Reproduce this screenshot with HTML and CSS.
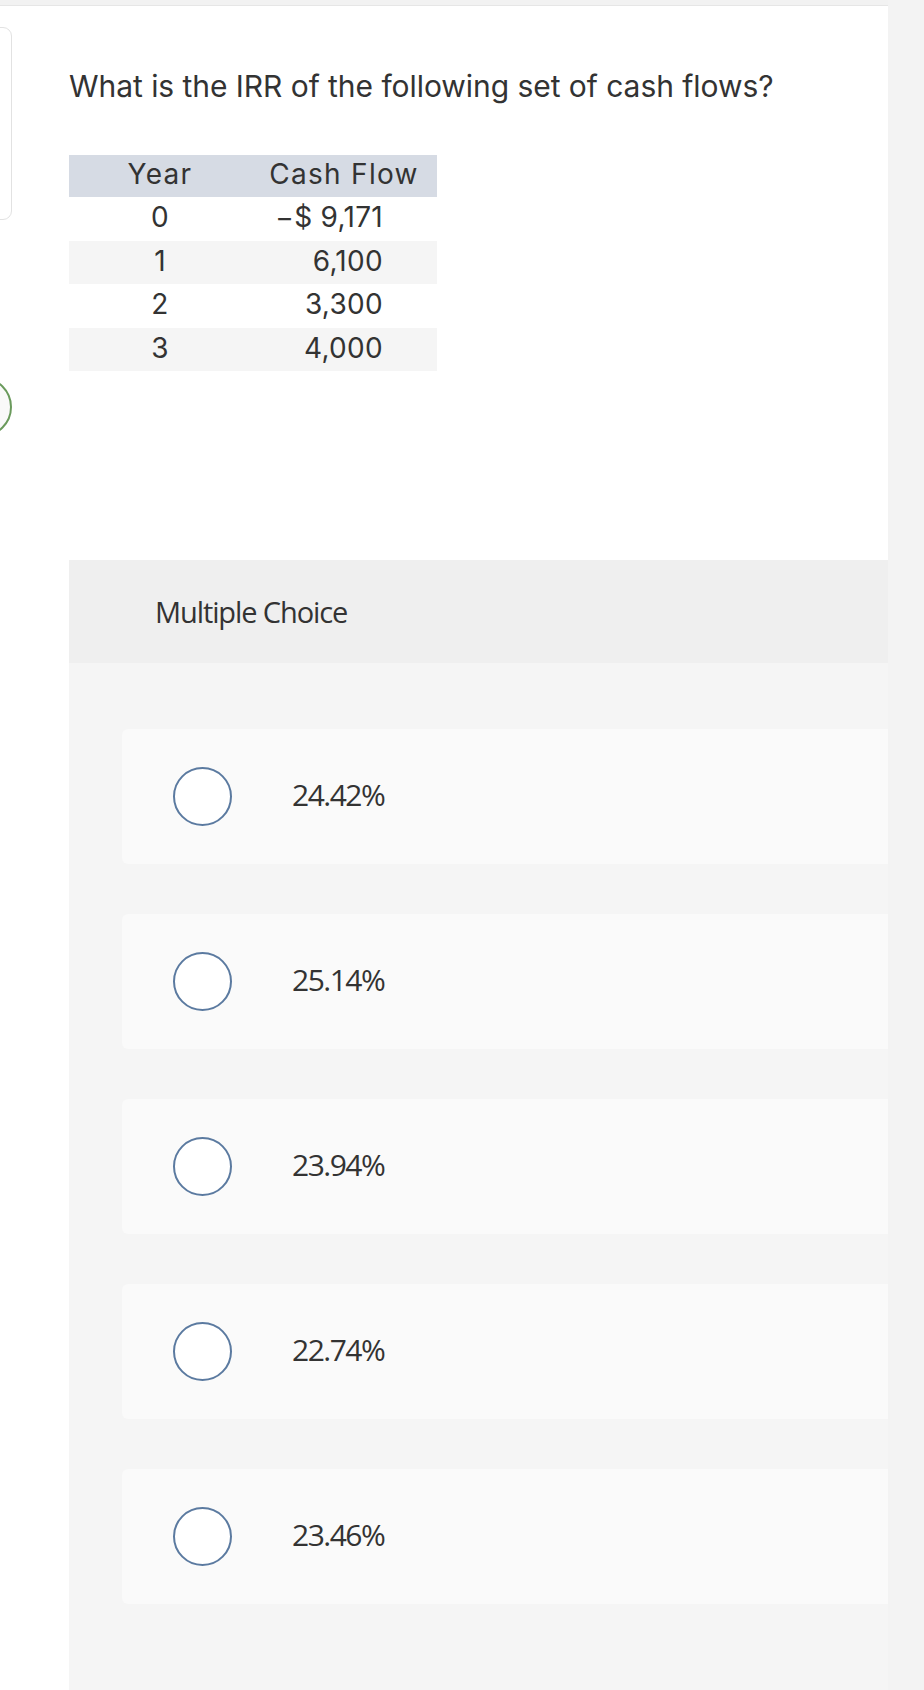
FILE: index.html
```html
<!DOCTYPE html>
<html lang="en">
<head>
<meta charset="utf-8">
<title>IRR question</title>
<link rel="stylesheet" href="styles.css">
</head>
<body>
<div class="page">
  <div class="main">
    <div class="topbar"></div>
    <div class="question-area">
      <div class="gutter">
        <div class="side-card"></div>
        <div class="side-flag"></div>
      </div>
      <div class="question">
        <p class="prompt">What is the IRR of the following set of cash flows?</p>
        <table class="cf-table">
          <thead>
            <tr><th class="col-year">Year</th><th class="col-cash">Cash Flow</th></tr>
          </thead>
          <tbody>
            <tr><td class="year">0</td><td class="cash">&minus;$ 9,171</td></tr>
            <tr class="alt"><td class="year">1</td><td class="cash">6,100</td></tr>
            <tr><td class="year">2</td><td class="cash">3,300</td></tr>
            <tr class="alt"><td class="year">3</td><td class="cash">4,000</td></tr>
          </tbody>
        </table>
      </div>
    </div>
    <section class="mc">
      <div class="mc-head">Multiple Choice</div>
      <div class="mc-body">
        <label class="option"><span class="radio"></span><span class="opt-text">24.42%</span></label>
        <label class="option"><span class="radio"></span><span class="opt-text">25.14%</span></label>
        <label class="option"><span class="radio"></span><span class="opt-text">23.94%</span></label>
        <label class="option"><span class="radio"></span><span class="opt-text">22.74%</span></label>
        <label class="option"><span class="radio"></span><span class="opt-text">23.46%</span></label>
      </div>
    </section>
  </div>
  <div class="rail"></div>
</div>
</body>
</html>
```
FILE: styles.css
```css
* { box-sizing: border-box; }

html, body {
  margin: 0;
  padding: 0;
  background: #ffffff;
}

body {
  font-family: "Inter", "Liberation Sans", sans-serif;
  color: #333333;
  overflow: hidden;
}

.page {
  display: flex;
  min-height: 1690px;
}

.main {
  flex: 0 0 888px;
  display: flex;
  flex-direction: column;
  background: #ffffff;
  overflow: hidden;
}

.rail {
  flex: 1 1 auto;
  background: #f3f3f3;
}

.topbar {
  height: 6px;
  background: #f2f2f2;
  border-bottom: 1px solid #e6e6e6;
}

.question-area {
  display: flex;
}

.gutter {
  flex: 0 0 69px;
  display: flex;
  flex-direction: column;
}

.side-card {
  margin-top: 21px;
  margin-left: -40px;
  width: 52px;
  height: 193px;
  border: 1px solid #e2e2e2;
  border-radius: 9px;
  background: #ffffff;
}

.side-flag {
  margin-top: 157px;
  margin-left: -48px;
  width: 60px;
  height: 60px;
  border: 2px solid #6a9a5c;
  border-radius: 50%;
  background: #f9f9f9;
}

.question {
  flex: 1 1 auto;
  padding-top: 62px;
  padding-bottom: 189px;
}

.prompt {
  margin: 0;
  font-size: 30px;
  line-height: 36px;
  letter-spacing: -0.05px;
  color: #333333;
}

.cf-table {
  margin-top: 51px;
  border-collapse: collapse;
  font-size: 28px;
}

.cf-table th {
  background: #d6dbe4;
  font-weight: 400;
  height: 42px;
  line-height: 38px;
  padding: 0 0 4px;
  text-align: center;
  letter-spacing: 1.3px;
}

.col-year { width: 182px; }
.col-cash { width: 186px; }

.cf-table td {
  height: 43.5px;
  line-height: 40px;
  padding: 0 0 3px;
  letter-spacing: 0.3px;
}

.cf-table td.year { text-align: center; }
.cf-table td.cash { text-align: right; padding-right: 54px; }

.cf-table tr.alt td { background: #f5f5f5; }

.mc {
  flex: 1 1 auto;
  margin-left: 69px;
  display: flex;
  flex-direction: column;
  background: #f5f5f5;
  font-family: "Open Sans", "Noto Sans", sans-serif;
}

.mc-head {
  height: 103px;
  display: flex;
  align-items: center;
  padding-left: 86px;
  background: #efefef;
  font-size: 29px;
  letter-spacing: -1.1px;
  color: #333333;
}

.mc-body {
  display: flex;
  flex-direction: column;
  gap: 50px;
  padding: 66px 0 60px 53px;
}

.option {
  height: 135px;
  display: flex;
  align-items: center;
  padding-left: 51px;
  background: #fafafa;
  border-radius: 6px 0 0 6px;
}

.radio {
  flex: 0 0 59px;
  width: 59px;
  height: 59px;
  border: 2px solid #5b7aa0;
  border-radius: 50%;
  background: #ffffff;
}

.opt-text {
  margin-left: 60px;
  margin-top: -4px;
  font-size: 30px;
  letter-spacing: -1.5px;
  color: #333333;
}
```
